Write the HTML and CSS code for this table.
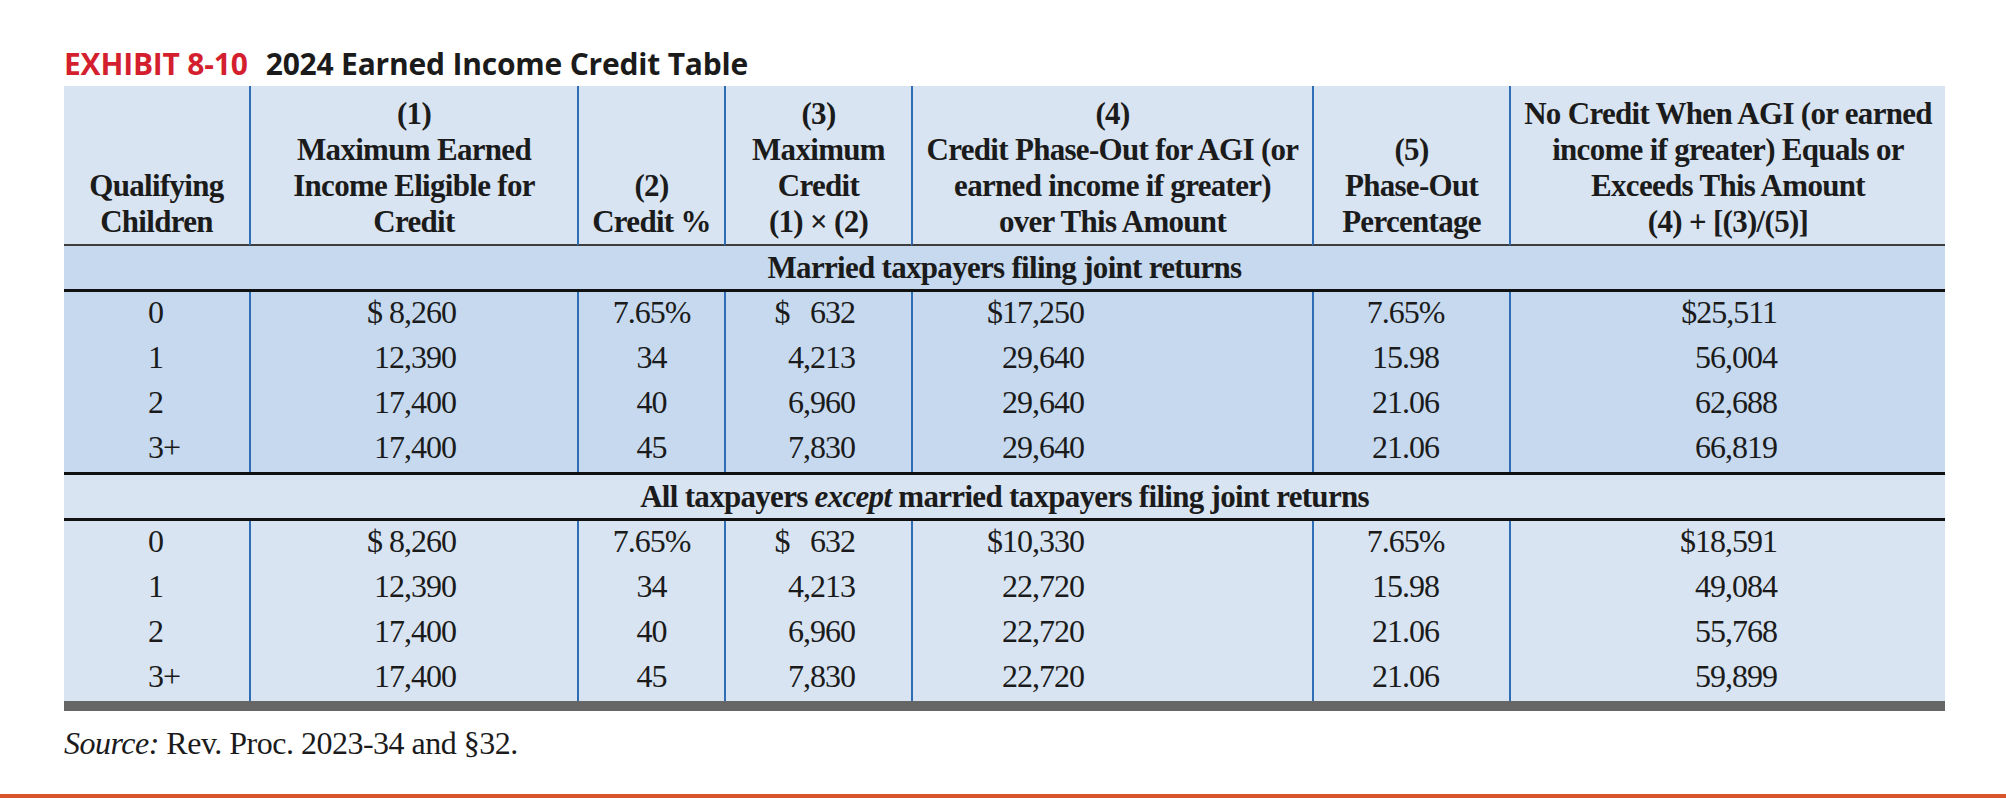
FILE: index.html
```html
<!DOCTYPE html>
<html lang="en">
<head>
    <meta charset="UTF-8">
    <meta name="viewport" content="width=device-width, initial-scale=1.0">
    <title>Exhibit 8-10 2024 Earned Income Credit Table</title>
    <link rel="stylesheet" href="styles.css">
</head>
<body>
    <div class="page">
        <h1 class="exhibit-title"><span class="exhibit-num">EXHIBIT 8-10</span>2024 Earned Income Credit Table</h1>

        <table class="eic-table">
            <colgroup>
                <col class="col-kids">
                <col class="col-earned">
                <col class="col-rate">
                <col class="col-max">
                <col class="col-phase">
                <col class="col-pct">
                <col class="col-none">
            </colgroup>
            <thead>
                <tr>
                    <th>Qualifying<br>Children</th>
                    <th>(1)<br>Maximum Earned<br>Income Eligible for<br>Credit</th>
                    <th>(2)<br>Credit %</th>
                    <th>(3)<br>Maximum<br>Credit<br>(1) × (2)</th>
                    <th>(4)<br>Credit Phase-Out for AGI (or<br>earned income if greater)<br>over This Amount</th>
                    <th>(5)<br>Phase-Out<br>Percentage</th>
                    <th>No Credit When AGI (or earned<br>income if greater) Equals or<br>Exceeds This Amount<br>(4) + [(3)/(5)]</th>
                </tr>
            </thead>

            <!-- married filing jointly -->
            <tbody class="married">
                <tr class="section">
                    <td colspan="7">Married taxpayers filing joint returns</td>
                </tr>
                <tr>
                    <td class="kids">0</td>
                    <td class="earned">$ 8,260</td>
                    <td class="rate">7.65%</td>
                    <td class="max">$&ensp;&thinsp;632</td>
                    <td class="phase">$17,250</td>
                    <td class="pct">7.65%</td>
                    <td class="none">$25,511</td>
                </tr>
                <tr>
                    <td class="kids">1</td>
                    <td class="earned">12,390</td>
                    <td class="rate">34</td>
                    <td class="max">4,213</td>
                    <td class="phase">29,640</td>
                    <td class="pct">15.98</td>
                    <td class="none">56,004</td>
                </tr>
                <tr>
                    <td class="kids">2</td>
                    <td class="earned">17,400</td>
                    <td class="rate">40</td>
                    <td class="max">6,960</td>
                    <td class="phase">29,640</td>
                    <td class="pct">21.06</td>
                    <td class="none">62,688</td>
                </tr>
                <tr>
                    <td class="kids">3+</td>
                    <td class="earned">17,400</td>
                    <td class="rate">45</td>
                    <td class="max">7,830</td>
                    <td class="phase">29,640</td>
                    <td class="pct">21.06</td>
                    <td class="none">66,819</td>
                </tr>
            </tbody>

            <!-- everyone else -->
            <tbody class="others">
                <tr class="section">
                    <td colspan="7">All taxpayers <em>except</em> married taxpayers filing joint returns</td>
                </tr>
                <tr>
                    <td class="kids">0</td>
                    <td class="earned">$ 8,260</td>
                    <td class="rate">7.65%</td>
                    <td class="max">$&ensp;&thinsp;632</td>
                    <td class="phase">$10,330</td>
                    <td class="pct">7.65%</td>
                    <td class="none">$18,591</td>
                </tr>
                <tr>
                    <td class="kids">1</td>
                    <td class="earned">12,390</td>
                    <td class="rate">34</td>
                    <td class="max">4,213</td>
                    <td class="phase">22,720</td>
                    <td class="pct">15.98</td>
                    <td class="none">49,084</td>
                </tr>
                <tr>
                    <td class="kids">2</td>
                    <td class="earned">17,400</td>
                    <td class="rate">40</td>
                    <td class="max">6,960</td>
                    <td class="phase">22,720</td>
                    <td class="pct">21.06</td>
                    <td class="none">55,768</td>
                </tr>
                <tr>
                    <td class="kids">3+</td>
                    <td class="earned">17,400</td>
                    <td class="rate">45</td>
                    <td class="max">7,830</td>
                    <td class="phase">22,720</td>
                    <td class="pct">21.06</td>
                    <td class="none">59,899</td>
                </tr>
            </tbody>
        </table>

        <p class="source"><em>Source:</em> Rev. Proc. 2023-34 and §32.</p>

        <div class="bottom-rule"></div>
    </div>
</body>
</html>
```

FILE: styles.css
```css
/* page */
body {
    margin: 0;
    background: #ffffff;
    color: #1b1b1b;
}

.page {
    min-height: 798px;
    display: flex;
    flex-direction: column;
}

.exhibit-title {
    margin: 48px 0 6px 64px;
    font-family: "Open Sans", Lato, sans-serif;
    font-weight: 700;
    font-size: 30px;
    line-height: 32px;
    letter-spacing: -0.2px;
    color: #1b1b1b;
}

.exhibit-num {
    color: #d41f2e;
    margin-right: 18px;
}

/* table */
.eic-table {
    margin-left: 64px;
    width: 1881px;
    table-layout: fixed;
    border-collapse: separate;
    border-spacing: 0;
    border-bottom: 10px solid #666666;
    font-family: "Liberation Serif", "Times New Roman", serif;
    color: #1b1b1b;
}

.col-kids { width: 185px; }
.col-earned { width: 328px; }
.col-rate { width: 147px; }
.col-max { width: 187px; }
.col-phase { width: 401px; }
.col-pct { width: 197px; }
.col-none { width: 436px; }

/* the printed face is a narrow Times, so size up and pull letters in */
.eic-table th {
    background: #d8e4f1;
    font-size: 31px;
    letter-spacing: -0.7px;
    line-height: 36px;
    font-weight: 700;
    text-align: center;
    vertical-align: bottom;
    padding: 10px 0 4px;
    border-bottom: 2px solid #3d3d3d;
}

.eic-table th + th,
.eic-table td + td {
    border-left: 2px solid #2f6db5;
}

.eic-table td {
    font-size: 32px;
    letter-spacing: -1px;
    line-height: 41px;
    padding: 0 0 4px;
    white-space: nowrap;
}

.married td {
    background: #c6d9ef;
}

.others td {
    background: #d8e4f1;
}

.section td {
    text-align: center;
    font-weight: 700;
    font-size: 31px;
    letter-spacing: -0.7px;
    line-height: 43px;
    padding: 0;
    border-bottom: 3px solid #111111;
}

.others .section td {
    border-top: 3px solid #111111;
}

/* cell alignment per column */
.kids { text-align: left; padding-left: 84px !important; }
.earned { text-align: right; padding-right: 121px !important; }
.rate { text-align: center; }
.max { text-align: right; padding-right: 56px !important; }
.phase { text-align: right; padding-right: 228px !important; }
.pct { text-align: center; padding-right: 12px !important; }
.none { text-align: right; padding-right: 168px !important; }

/* footnote */
.source {
    margin: 14px 0 0 64px;
    font-family: "Liberation Serif", "Times New Roman", serif;
    font-size: 32px;
    letter-spacing: -0.5px;
    line-height: 36px;
    color: #1b1b1b;
}

.bottom-rule {
    margin-top: auto;
    height: 4px;
    background: #d9552b;
}
```
